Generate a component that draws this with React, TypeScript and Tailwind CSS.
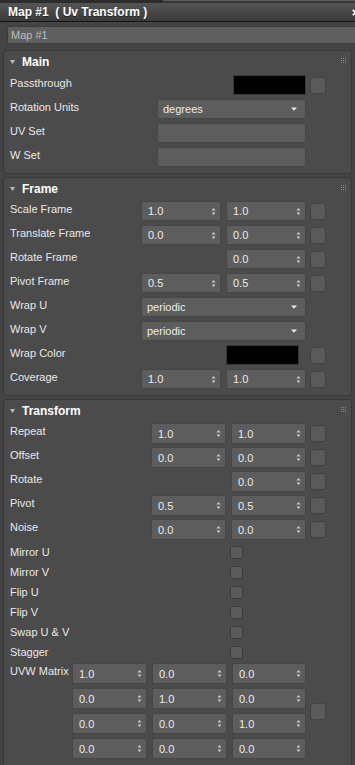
import React from 'react';

// 3ds Max style "Uv Transform" map parameter rollouts

const Arrows = () => (
    <svg width="5" height="9" viewBox="0 0 5 9" className="shrink-0">
        <path d="M0.5 3.5 L2.5 1 L4.5 3.5 Z" fill="#c9c9c9" />
        <path d="M0.5 5.5 L2.5 8 L4.5 5.5 Z" fill="#c9c9c9" />
    </svg>
);

const Spinner = ({ value, className }: { value: string; className: string }) => (
    <div className={`${className} h-full flex items-center justify-between bg-[#5d5d5d] border border-[#464646] rounded-[2px] pl-[6px] pr-[4px] text-[#ececec]`}>
        <span className="pt-[1px]">{value}</span>
        <Arrows />
    </div>
);

const Dropdown = ({ value, className }: { value: string; className: string }) => (
    <div className={`${className} h-full flex items-center justify-between bg-[#5d5d5d] border border-[#464646] rounded-[2px] pl-[5px] pr-[8px] text-[#ececec]`}>
        <span className="pt-[1px]">{value}</span>
        <svg width="6" height="4" viewBox="0 0 6 4">
            <path d="M0 0.5 L6 0.5 L3 3.8 Z" fill="#e6e6e6" />
        </svg>
    </div>
);

const Field = ({ className }: { className: string }) => (
    <div className={`${className} h-full bg-[#5d5d5d] border border-[#464646] rounded-[2px]`} />
);

const Swatch = ({ className }: { className: string }) => (
    <div className={`${className} h-full bg-black border border-[#3a3a3a]`} />
);

const BigCheck = () => (
    <div className="w-[16px] h-[17px] bg-[#5a5a5a] border border-[#424242] rounded-[3px]" />
);

const SmallCheck = () => (
    <div className="w-[13px] h-[13px] bg-[#5a5a5a] border border-[#3d3d3d] rounded-[1px]" />
);

const Grip = () => (
    <svg width="5" height="5" viewBox="0 0 5 5" className="mb-[4px]">
        {[0, 2, 4].map((y) =>
            [0, 2, 4].map((x) => <rect key={`${x}-${y}`} x={x} y={y} width="1" height="1" fill="#8c8c8c" />)
        )}
    </svg>
);

const Header = ({ title }: { title: string }) => (
    <div className="h-[22px] flex items-center pl-[6px] pr-[5px]">
        <svg width="5" height="4" viewBox="0 0 5 4">
            <path d="M0 0 L5 0 L2.5 4 Z" fill="#bdbdbd" />
        </svg>
        <span className="ml-[7px] text-[12px] font-bold text-white">{title}</span>
        <div className="ml-auto">
            <Grip />
        </div>
    </div>
);

// one parameter row: label on the left, controls right-aligned, optional checkbox
const Row = ({
    label,
    children,
    check = true,
    height = 'h-[20px]',
}: {
    label: string;
    children?: React.ReactNode;
    check?: boolean;
    height?: string;
}) => (
    <div className={`${height} flex items-start pl-[6px] pr-[25px]`}>
        <span className="flex-1 mt-[2px] leading-[13px] text-[#e8e8e8]">{label}</span>
        <div className="h-full flex justify-end gap-[5px]">{children}</div>
        <div className="w-[16px] ml-[4px] h-full flex items-center">{check && <BigCheck />}</div>
    </div>
);

const CheckRow = ({ label }: { label: string }) => (
    <div className="h-[20px] flex items-center pl-[6px] pr-[45px]">
        <span className="flex-1 text-[#e8e8e8]">{label}</span>
        <div className="w-[76px]">
            <SmallCheck />
        </div>
    </div>
);

const matrix = [
    ['1.0', '0.0', '0.0'],
    ['0.0', '1.0', '0.0'],
    ['0.0', '0.0', '1.0'],
    ['0.0', '0.0', '0.0'],
];

export default function App() {
    return (
        <div className="w-[355px] h-[765px] overflow-hidden bg-[#444444] font-['Liberation_Sans',Arial,sans-serif] text-[11px] leading-[13px]">
            {/* window top edge */}
            <div className="h-[3px] flex">
                <div className="w-[163px] bg-[#2c2c2c]" />
                <div className="flex-1 bg-[#383838] border-t border-[#5e5e5e]" />
            </div>

            {/* title bar */}
            <div className="h-[19px] flex items-center justify-between pl-[8px] bg-gradient-to-b from-[#555555] to-[#3a3a3a] border-b border-[#141414]">
                <span className="text-[12px] font-bold text-white whitespace-pre [text-shadow:0_1px_0_#222]">Map #1  ( Uv Transform )</span>
                {/* close button, mostly off the edge */}
                <svg width="7" height="7" viewBox="0 0 7 7" className="mr-[-4px] mt-[1px]">
                    <path d="M0.8 0.8 L6.2 6.2 M6.2 0.8 L0.8 6.2" stroke="#ffffff" strokeWidth="1.8" />
                </svg>
            </div>

            {/* map name */}
            <div className="pt-[4px] pl-[7px] mr-[-10px]">
                <div className="h-[18px] flex items-center pl-[3px] bg-[#5f5f5f] border border-[#3c3c3c] text-[#bdbdbd]">
                    Map #1
                </div>
            </div>

            <div className="mt-[6px] px-[3px] flex flex-col gap-[3px]">
                {/* Main */}
                <div className="bg-[#4b4b4b] border border-[#383838] rounded-[3px] pb-[6px]">
                    <Header title="Main" />
                    <div className="mt-[2px] flex flex-col gap-[4px]">
                        <Row label="Passthrough">
                            <Swatch className="w-[73px]" />
                        </Row>
                        <Row label="Rotation Units" check={false}>
                            <Dropdown value="degrees" className="w-[149px]" />
                        </Row>
                        <Row label="UV Set" check={false}>
                            <Field className="w-[149px]" />
                        </Row>
                        <Row label="W Set" check={false}>
                            <Field className="w-[149px]" />
                        </Row>
                    </div>
                </div>

                {/* Frame */}
                <div className="bg-[#4b4b4b] border border-[#383838] rounded-[3px] pb-[6px]">
                    <Header title="Frame" />
                    <div className="mt-[1px] flex flex-col gap-[4px]">
                        <Row label="Scale Frame">
                            <Spinner value="1.0" className="w-[80px]" />
                            <Spinner value="1.0" className="w-[80px]" />
                        </Row>
                        <Row label="Translate Frame">
                            <Spinner value="0.0" className="w-[80px]" />
                            <Spinner value="0.0" className="w-[80px]" />
                        </Row>
                        <Row label="Rotate Frame">
                            <Spinner value="0.0" className="w-[80px]" />
                        </Row>
                        <Row label="Pivot Frame">
                            <Spinner value="0.5" className="w-[80px]" />
                            <Spinner value="0.5" className="w-[80px]" />
                        </Row>
                        <Row label="Wrap U" check={false}>
                            <Dropdown value="periodic" className="w-[165px]" />
                        </Row>
                        <Row label="Wrap V" check={false}>
                            <Dropdown value="periodic" className="w-[165px]" />
                        </Row>
                        <Row label="Wrap Color">
                            <Swatch className="w-[73px] mr-[7px]" />
                        </Row>
                        <Row label="Coverage">
                            <Spinner value="1.0" className="w-[80px]" />
                            <Spinner value="1.0" className="w-[80px]" />
                        </Row>
                    </div>
                </div>

                {/* Transform */}
                <div className="bg-[#4b4b4b] border border-[#383838] rounded-[3px] pb-[10px]">
                    <Header title="Transform" />
                    <div className="mt-[1px] flex flex-col gap-[3px]">
                        <Row label="Repeat" height="h-[21px]">
                            <Spinner value="1.0" className="w-[75px]" />
                            <Spinner value="1.0" className="w-[75px]" />
                        </Row>
                        <Row label="Offset" height="h-[21px]">
                            <Spinner value="0.0" className="w-[75px]" />
                            <Spinner value="0.0" className="w-[75px]" />
                        </Row>
                        <Row label="Rotate" height="h-[21px]">
                            <Spinner value="0.0" className="w-[75px]" />
                        </Row>
                        <Row label="Pivot" height="h-[21px]">
                            <Spinner value="0.5" className="w-[75px]" />
                            <Spinner value="0.5" className="w-[75px]" />
                        </Row>
                        <Row label="Noise" height="h-[21px]">
                            <Spinner value="0.0" className="w-[75px]" />
                            <Spinner value="0.0" className="w-[75px]" />
                        </Row>
                    </div>
                    <div className="mt-[2px] flex flex-col">
                        <CheckRow label="Mirror U" />
                        <CheckRow label="Mirror V" />
                        <CheckRow label="Flip U" />
                        <CheckRow label="Flip V" />
                        <CheckRow label="Swap U & V" />
                        <CheckRow label="Stagger" />
                    </div>

                    {/* UVW matrix */}
                    <div className="mt-[1px] flex pl-[6px] pr-[25px]">
                        <span className="w-[62px] mt-[2px] text-[#e8e8e8]">UVW Matrix</span>
                        <div className="grid grid-cols-[75px_75px_74px] gap-x-[5px] gap-y-[4px]">
                            {matrix.map((row, i) =>
                                row.map((v, j) => (
                                    <div key={`${i}-${j}`} className="h-[21px] flex">
                                        <Spinner value={v} className="w-full" />
                                    </div>
                                ))
                            )}
                        </div>
                        <div className="ml-[4px] flex items-center">
                            <BigCheck />
                        </div>
                    </div>
                </div>
            </div>
        </div>
    );
}
